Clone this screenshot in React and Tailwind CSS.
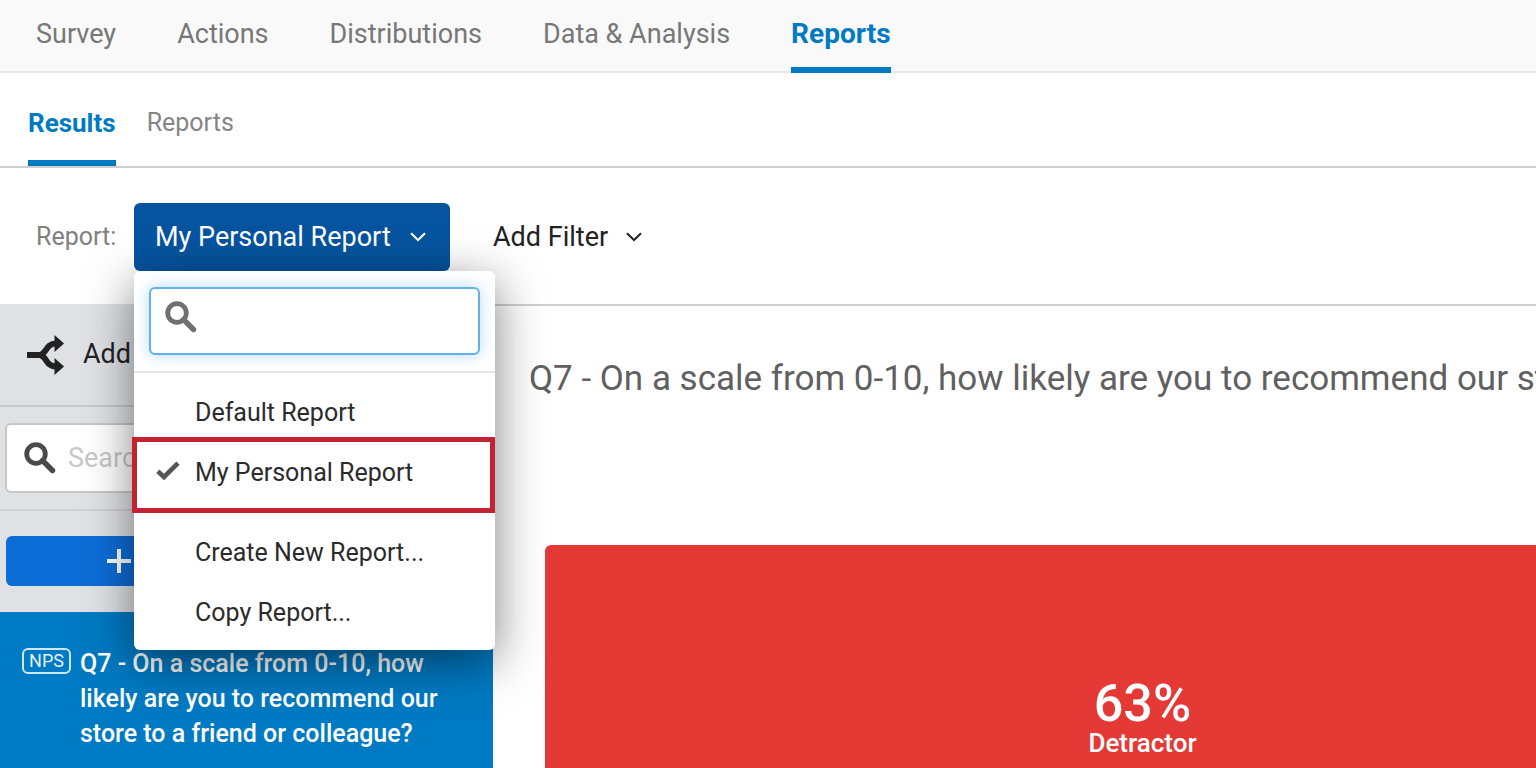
import React from 'react';

const mainTabs = ['Survey', 'Actions', 'Distributions', 'Data & Analysis', 'Reports'];
const reports = ['Default Report', 'My Personal Report'];
const reportActions = ['Create New Report...', 'Copy Report...'];

const ChevronIcon = ({ className }) => (
  <svg className={className} width="16" height="10" viewBox="0 0 16 10" fill="none" stroke="currentColor" strokeWidth="2" aria-hidden="true">
    <path d="M1 1.2 8 8l7-6.8" />
  </svg>
);

const SearchIcon = ({ className }) => (
  <svg className={className} width="32" height="32" viewBox="0 0 32 32" fill="none" stroke="currentColor" aria-hidden="true">
    <circle cx="12" cy="12" r="9.3" strokeWidth="4.8" />
    <path d="M18.5 18.5 28.5 28.5" strokeWidth="5.4" strokeLinecap="round" />
  </svg>
);

const SplitIcon = () => (
  <svg className="shrink-0" width="37" height="40" viewBox="0 0 37 40" fill="none" aria-hidden="true">
    <path d="M0 20h15" stroke="#222" strokeWidth="6" />
    <path d="M12 20c8 0 6-11.500 17-11.500M12 20c8 0 6 11.500 17 11.500" stroke="#222" strokeWidth="6" />
    <path d="M27.500 0 37 8.500 27.500 17zM27.500 23l9.500 8.500-9.500 8.500z" fill="#222" />
  </svg>
);

const CheckIcon = () => (
  <svg width="24" height="20" viewBox="0 0 24 20" fill="none" stroke="#555" strokeWidth="4.600" aria-hidden="true">
    <path d="M1.800 10.200 8 16 22 2.200" />
  </svg>
);

const ReportMenu = () => (
  <div className="absolute left-0 top-full z-10 w-[361px] rounded-md bg-white pb-[7px] text-[25px] text-[#2b2b2b] shadow-[0_12px_48px_rgba(0,0,0,0.5)]">
    <div className="border-b-2 border-[#e6e6e6] px-[15px] py-4">
      <label className="flex h-[68px] items-center rounded-md border-2 border-[#62b0f0] bg-white pl-[14px] shadow-[0_0_16px_rgba(98,176,240,0.45)]">
        <SearchIcon className="-mt-2 shrink-0 text-[#707070]" />
        <input type="text" aria-label="Search reports" className="ml-3 w-full min-w-0 bg-transparent outline-none" />
      </label>
    </div>
    <ul className="pt-[10px]">
      {reports.map((name) => (
        <li key={name} className="relative">
          <button type="button" className="flex h-[60px] w-full items-center text-left">
            <span className="-mt-1 w-[61px] shrink-0 pl-[22px]">{name === 'My Personal Report' && <CheckIcon />}</span>
            {name}
          </button>
          {name === 'My Personal Report' && (
            <span className="pointer-events-none absolute -bottom-[10px] -left-[2px] -top-[6px] right-0 border-[5px] border-[#c32232]"></span>
          )}
        </li>
      ))}
    </ul>
    <ul className="pt-5">
      {reportActions.map((name) => (
        <li key={name}>
          <button type="button" className="flex h-[60px] w-full items-center pl-[61px] text-left">{name}</button>
        </li>
      ))}
    </ul>
  </div>
);

const Sidebar = () => (
  <aside className="flex w-[493px] shrink-0 flex-col bg-[#dfe1e5]">
    <div className="flex h-[103px] items-center gap-[19px] border-b-2 border-[#c6c8cb] pl-[27px] text-[27px] text-[#222]">
      <SplitIcon />
      <button type="button">Add</button>
    </div>
    <div className="border-b-2 border-[#cfd1d4] px-[5px] py-4">
      <label className="flex h-[70px] items-center rounded-md border-2 border-[#c6c6c6] bg-white pl-[17px]">
        <SearchIcon className="shrink-0 text-[#4a4a4a]" />
        <input type="text" aria-label="Search" placeholder="Search" className="ml-3 w-full min-w-0 bg-transparent text-[27px] outline-none placeholder:text-[#c8c8c8]" />
      </label>
    </div>
    <div className="px-[6px] pb-[26px] pt-[25px]">
      <button type="button" aria-label="Add page" className="flex h-[50px] w-full items-center rounded-md bg-[#0d6dd6] pl-[101px] text-white">
        <svg width="24" height="24" viewBox="0 0 24 24" stroke="currentColor" strokeWidth="4" aria-hidden="true">
          <path d="M12 0v24M0 12h24" />
        </svg>
      </button>
    </div>
    <a href="#q7" className="flex grow items-start gap-[9px] bg-[#007ac3] pl-[22px] pr-10 pt-[34px] text-[25px] font-medium leading-[35px] text-white">
      <span className="mt-[2px] flex h-[26px] w-[49px] shrink-0 items-center justify-center rounded-md border-2 border-[#cfe6f5] text-[18px] font-normal leading-none text-[#e3f1fa]">NPS</span>
      <span>Q7 - On a scale from 0-10, how likely are you to recommend our store to a friend or colleague?</span>
    </a>
  </aside>
);

export default function App() {
  return (
    <div className="flex h-screen flex-col overflow-hidden bg-white font-[Roboto,'Liberation_Sans',sans-serif]">
      <nav className="flex h-[73px] shrink-0 gap-[61px] border-b-2 border-[#e8e8e8] bg-[#f9f9f9] pl-9 text-[27px]">
        {mainTabs.map((tab) => (
          <a
            key={tab}
            href="#tab"
            className={
              tab === 'Reports'
                ? '-mb-[2px] whitespace-nowrap border-b-[6px] border-[#007ac3] pt-[14px] text-[28px] font-bold leading-[40px] text-[#007ac3]'
                : 'whitespace-nowrap pt-[14px] leading-[40px] text-[#777]'
            }
          >
            {tab}
          </a>
        ))}
      </nav>

      <nav className="flex h-[95px] shrink-0 gap-[31px] border-b-2 border-[#cfcfcf] pl-7 text-[25px] leading-[38px]">
        <a href="#results" className="border-b-[6px] border-[#007ac3] pt-[31px] text-[26px] font-bold leading-[38px] text-[#007ac3]">Results</a>
        <a href="#reports" className="pt-[31px] text-[#858585]">Reports</a>
      </nav>

      <div className="flex h-[136px] shrink-0 items-center pl-9 pt-[2px]">
        <span className="w-[98px] text-[25px] text-[#808080]">Report:</span>
        <div className="relative">
          <button type="button" className="flex h-[68px] w-[316px] items-center justify-between whitespace-nowrap rounded-md bg-[#0654a0] pl-[21px] pr-6 text-[27px] text-white">
            My Personal Report
            <ChevronIcon />
          </button>
          <ReportMenu />
        </div>
        <button type="button" className="ml-[43px] flex items-center gap-[18px] text-[27px] text-[#222]">
          Add Filter
          <ChevronIcon />
        </button>
      </div>

      <div className="flex min-h-0 grow">
        <Sidebar />
        <main className="min-w-0 grow overflow-hidden border-t-2 border-[#cfcfcf] pl-9">
          <h1 className="whitespace-nowrap pt-[51px] text-[35px] leading-[44px] text-[#606060]">
            Q7 - On a scale from 0-10, how likely are you to recommend our store to a friend or colleague?
          </h1>
          {/* the breakdown bar runs on past the right edge of the panel */}
          <div className="-mr-[204px] ml-4 mt-[144px] flex h-[320px] flex-col items-center rounded-md bg-[#e53935] pt-[133px] text-white">
            <span className="text-[52px] font-medium leading-[52px]">63%</span>
            <span className="text-[26px] font-medium leading-[26px]">Detractor</span>
          </div>
        </main>
      </div>
    </div>
  );
}
